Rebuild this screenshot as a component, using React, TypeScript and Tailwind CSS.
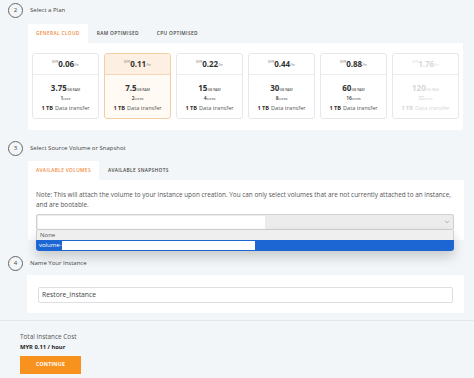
import { ChevronDown } from "lucide-react";

const plans = [
  { price: "0.06", ram: "3.75", cores: "1", unit: "core" },
  { price: "0.11", ram: "7.5", cores: "2", unit: "cores", selected: true },
  { price: "0.22", ram: "15", cores: "4", unit: "cores" },
  { price: "0.44", ram: "30", cores: "8", unit: "cores" },
  { price: "0.88", ram: "60", cores: "16", unit: "cores" },
  { price: "1.76", ram: "120", cores: "32", unit: "cores", disabled: true },
];

function StepHeader({ n, title }: { n: number; title: string }) {
  return (
    <div className="flex h-[20px] items-center gap-[7px] pl-[8px]">
      <div className="flex h-[15px] w-[15px] items-center justify-center rounded-full border border-[#666] text-[6px] leading-none text-[#444]">
        {n}
      </div>
      <p className="text-[6px] text-[#444]">{title}</p>
    </div>
  );
}

function Tabs({ items }: { items: string[] }) {
  return (
    <div className="ml-[28px] flex h-[19px]">
      {items.map((t, i) => (
        <div
          key={t}
          className={
            i === 0
              ? "flex items-center bg-white px-[8px] text-[4.8px] font-semibold tracking-[0.35px] text-[#f0883a] uppercase"
              : "flex items-center px-[9px] text-[4.8px] font-semibold tracking-[0.35px] text-[#444] uppercase"
          }
        >
          {t}
        </div>
      ))}
    </div>
  );
}

function PlanCard({ p }: { p: (typeof plans)[number] }) {
  const dim = p.disabled;
  return (
    <div
      className={
        p.selected
          ? "flex h-[66px] w-[67px] flex-col overflow-hidden rounded-[3px] border border-[#f3cfa8] bg-[#fffaf4]"
          : "flex h-[66px] w-[67px] flex-col overflow-hidden rounded-[3px] border border-[#e6e8eb] bg-white"
      }
    >
      <div
        className={
          p.selected
            ? "flex h-[21px] items-center justify-center border-b border-[#f3d6b8] bg-[#fdf0e3]"
            : "flex h-[21px] items-center justify-center border-b border-[#eceef0]"
        }
      >
        <span className={dim ? "relative -top-[2px] text-[3px] text-[#ddd]" : "relative -top-[2px] text-[3px] text-[#888]"}>MYR</span>
        <span className={dim ? "text-[8px] leading-none font-bold text-[#d8d8d8]" : "text-[8px] leading-none font-bold text-[#333]"}>
          {p.price}
        </span>
        <span className={dim ? "relative top-[1px] text-[3.5px] text-[#ddd]" : "relative top-[1px] text-[3.5px] text-[#777]"}>/hr</span>
      </div>
      <div className={dim ? "flex flex-col items-center pt-[9px] text-[#d6d6d6]" : "flex flex-col items-center pt-[9px] text-[#333]"}>
        <div className="flex h-[10px] items-baseline">
          <span className="text-[8px] leading-none font-bold">{p.ram}</span>
          <span className="text-[3.5px] leading-none">GB RAM</span>
        </div>
        <div className="flex h-[9px] items-center">
          <span className="text-[5px] font-semibold">{p.cores}</span>
          <span className="text-[3.5px]">{p.unit}</span>
        </div>
        <div className="flex h-[10px] items-center gap-[2px] text-[5.6px]">
          <span className="font-bold">1 TB</span>
          <span className={dim ? "" : "text-[#555]"}>Data transfer</span>
        </div>
      </div>
    </div>
  );
}

export default function App() {
  return (
    <div className="h-[378px] w-[474px] overflow-hidden bg-[#f3f6f8] font-['Open_Sans',sans-serif]">
      <StepHeader n={2} title="Select a Plan" />
      <div className="mt-[4px]">
        <Tabs items={["General Cloud", "RAM Optimised", "CPU Optimised"]} />
        <div className="ml-[28px] flex w-[435px] gap-[5px] bg-white px-[4px] pt-[10px] pb-[11px]">
          {plans.map((p) => (
            <PlanCard key={p.price} p={p} />
          ))}
        </div>
      </div>

      <div className="mt-[8px]">
        <StepHeader n={3} title="Select Source Volume or Snapshot" />
      </div>
      <div className="mt-[3px]">
        <Tabs items={["Available Volumes", "Available Snapshots"]} />
        <div className="relative ml-[28px] w-[436px] bg-white px-[8px] pt-[10px] pb-[10px]">
          <p className="text-[6.4px] leading-[10px] whitespace-nowrap text-[#555]">
            Note: This will attach the volume to your instance upon creation. You can only select volumes that are not currently attached to an instance,
            <br />
            and are bootable.
          </p>
          <div className="mt-[4px] flex h-[16px] w-[418px] items-center rounded-[2px] border border-[#cfcfcf] bg-[#ececec]">
            <div className="ml-[1px] h-[13px] w-[227px] bg-white" />
            <ChevronDown className="mr-[3px] ml-auto h-[6px] w-[6px] text-[#666]" strokeWidth={2} />
          </div>
          <div className="absolute top-[50px] left-[8px] w-[418px] overflow-hidden rounded-b-[3px] shadow-[0_6px_12px_rgba(0,0,0,0.18)]">
            <div className="flex h-[10px] items-center border-x border-[#cfcfcf] bg-[#efefef] pl-[3px] text-[6px] text-[#555]">
              None
            </div>
            <div className="flex h-[11px] items-center bg-[#1b66d2] pl-[3px] text-[6px] text-white">
              <span>volume-</span>
              <div className="h-[9px] w-[193px] bg-white" />
            </div>
          </div>
        </div>
      </div>

      <div className="mt-[13px]">
        <StepHeader n={4} title="Name Your Instance" />
      </div>
      <div className="mt-[2px] ml-[27px] w-[437px] bg-white px-[11px] pt-[12px] pb-[10px]">
        <div className="flex h-[16px] items-center rounded-[2px] border border-[#dcdfe3] bg-white pl-[3px] text-[6.8px] text-[#444]">
          Restore_Instance
        </div>
      </div>

      <div className="mt-[7px] border-t border-[#e3e7eb] pt-[11px] pl-[20px]">
        <p className="text-[6.4px] leading-[10px] text-[#555]">Total Instance Cost</p>
        <p className="text-[5.8px] leading-[10px] font-bold text-[#222]">MYR 0.11 / hour</p>
        <button className="mt-[4px] flex h-[18px] w-[61px] items-center justify-center bg-[#f7921f] text-[5.2px] font-bold tracking-[0.2px] text-white">
          CONTINUE
        </button>
      </div>
    </div>
  );
}
